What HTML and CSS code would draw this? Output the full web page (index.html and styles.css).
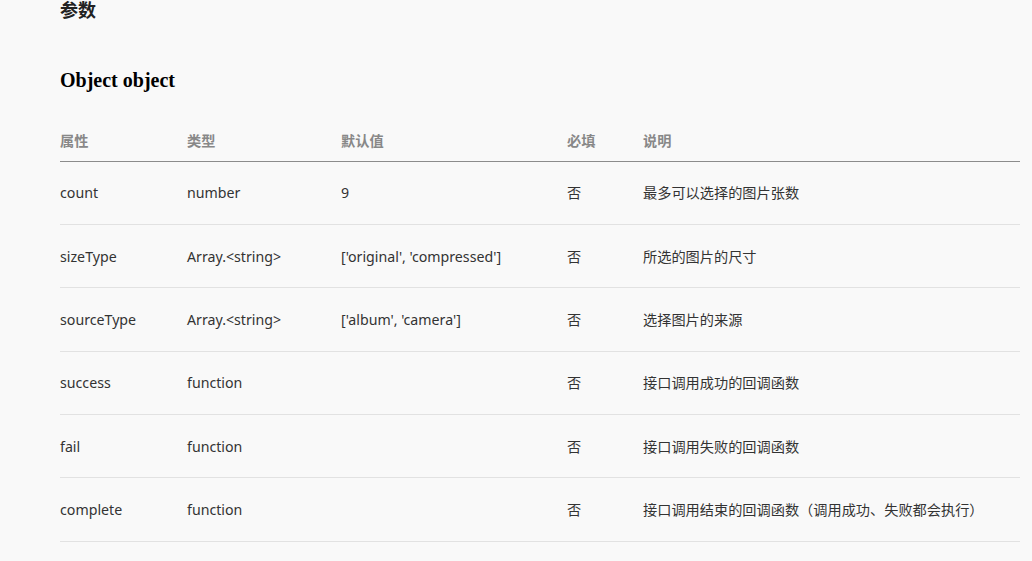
FILE: index.html
```html
<!DOCTYPE html>
<html lang="zh">
<head>
<meta charset="utf-8">
<link rel="stylesheet" href="styles.css">
</head>
<body>
<div class="page">
  <h2 class="title">参数</h2>
  <h3 class="subtitle">Object object</h3>
  <table class="params">
    <thead>
      <tr><th class="c1">属性</th><th class="c2">类型</th><th class="c3">默认值</th><th class="c4">必填</th><th>说明</th></tr>
    </thead>
    <tbody>
      <tr><td>count</td><td>number</td><td>9</td><td>否</td><td>最多可以选择的图片张数</td></tr>
      <tr><td>sizeType</td><td>Array.&lt;string&gt;</td><td>['original', 'compressed']</td><td>否</td><td>所选的图片的尺寸</td></tr>
      <tr><td>sourceType</td><td>Array.&lt;string&gt;</td><td>['album', 'camera']</td><td>否</td><td>选择图片的来源</td></tr>
      <tr><td>success</td><td>function</td><td></td><td>否</td><td>接口调用成功的回调函数</td></tr>
      <tr><td>fail</td><td>function</td><td></td><td>否</td><td>接口调用失败的回调函数</td></tr>
      <tr><td>complete</td><td>function</td><td></td><td>否</td><td>接口调用结束的回调函数（调用成功、失败都会执行）</td></tr>
    </tbody>
  </table>
</div>
</body>
</html>
```
FILE: styles.css
```css
html, body {
  margin: 0;
  padding: 0;
  background: #f9f9f9;
}
.page {
  padding: 0 12px 0 60px;
  font-family: "Noto Sans", "Noto Sans CJK SC", sans-serif;
  color: #333;
}
.title {
  margin: 0;
  font-size: 18px;
  line-height: 20px;
  font-weight: bold;
  color: #222;
}
.subtitle {
  margin: 48px 0 0 0;
  font-family: "Liberation Serif", "Noto Sans CJK SC", serif;
  font-size: 20px;
  line-height: 24px;
  font-weight: bold;
  color: #000;
}
.params {
  width: 960px;
  border-collapse: collapse;
  margin-top: 37.5px;
  font-size: 14.2px;
}
.params th {
  text-align: left;
  font-weight: bold;
  color: #888;
  padding: 0 0 10px 0;
  line-height: 21px;
  border-bottom: 1px solid #8c8c8c;
}
.params td {
  padding: 20.7px 0;
  line-height: 21px;
  border-bottom: 1px solid #e2e2e2;
  white-space: nowrap;
}
.c1 { width: 127px; }
.c2 { width: 154px; }
.c3 { width: 226px; }
.c4 { width: 76px; }
```
